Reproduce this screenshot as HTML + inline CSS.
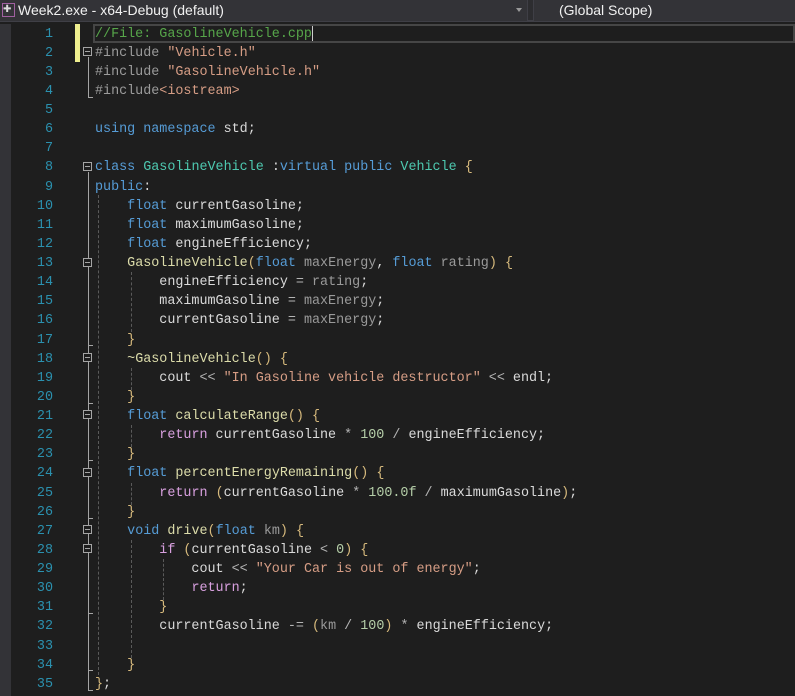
<!DOCTYPE html>
<html><head><meta charset="utf-8"><style>
body{margin:0;width:795px;height:696px;background:#1e1e1e;overflow:hidden;position:relative;font-family:"Liberation Mono",monospace;}
.top{position:absolute;left:0;top:0;width:795px;height:22px;background:#2d2d30;border-bottom:2px solid #3f3f46;box-sizing:border-box;}
.dd1{position:absolute;left:0;top:0;width:527px;height:21px;background:#333337;border-right:1px solid #3f3f46;}
.dd2{position:absolute;left:533px;top:0;width:262px;height:21px;background:#333337;border-left:1px solid #3f3f46;}
.tt{font-family:"Liberation Sans",sans-serif;font-size:14px;color:#f1f1f1;position:absolute;top:2px;}
.strip{position:absolute;left:0;top:24px;width:11px;height:672px;background:#333337;}
.ln{position:absolute;left:11px;width:42px;text-align:right;color:#2b91af;font-size:13.4px;line-height:19.12px;}
.code{position:absolute;left:95px;color:#dadada;font-size:13.4px;line-height:19.12px;white-space:pre;}
.k{color:#569cd6}.t{color:#4ec9b0}.s{color:#d69d85}.c{color:#57a64a}.f{color:#dcdcaa}.p{color:#9a9a9a}.n{color:#b5cea8}.o{color:#b4b4b4}.r{color:#d8a0df}.b{color:#d7ba7d}.pp{color:#9b9b9b}
.fold{position:absolute;left:83px;width:9px;height:9px;border:1px solid #a5a5a5;box-sizing:border-box;background:#1e1e1e;}
.fold:after{content:"";position:absolute;left:1px;top:3px;width:5px;height:1px;background:#a5a5a5;}
.vl{position:absolute;left:88px;width:1px;background:#a5a5a5;}
.tick{position:absolute;left:88px;width:5px;height:1px;background:#a5a5a5;}
.g{position:absolute;width:0;border-left:1px dashed #5a5a5a;}
</style></head><body>
<div class="top"><div class="dd1"><span style="position:absolute;left:2px;top:3px;width:13px;height:14px;border:1px solid #a060a0;box-sizing:border-box;color:#ddd;font-size:10px;line-height:12px;font-family:'DejaVu Sans';">✚</span><span class="tt" style="left:18px">Week2.exe - x64-Debug (default)</span><span style="position:absolute;left:516px;top:8px;border-left:3px solid transparent;border-right:3px solid transparent;border-top:4px solid #999;"></span></div>
<div class="dd2"><span class="tt" style="left:25px">(Global Scope)</span></div></div>
<div class="strip"></div>
<div style="position:absolute;left:75px;top:24px;width:5px;height:38px;background:#efef8f"></div>
<div style="position:absolute;left:93px;top:24px;width:702px;height:19px;border:2px solid #464646;box-sizing:border-box;"></div>
<div style="position:absolute;left:312px;top:26px;width:1px;height:15px;background:#ccc"></div>
<div class="ln" style="top:24.5px">1<br>2<br>3<br>4<br>5<br>6<br>7<br>8<br>9<br>10<br>11<br>12<br>13<br>14<br>15<br>16<br>17<br>18<br>19<br>20<br>21<br>22<br>23<br>24<br>25<br>26<br>27<br>28<br>29<br>30<br>31<br>32<br>33<br>34<br>35</div>
<div class="vl" style="top:57px;height:40px"></div><div class="tick" style="top:97px"></div>
<div class="vl" style="top:172px;height:519px"></div><div class="tick" style="top:690px"></div>
<div class="tick" style="top:345px"></div><div class="tick" style="top:403px"></div><div class="tick" style="top:460px"></div><div class="tick" style="top:518px"></div><div class="tick" style="top:613px"></div><div class="tick" style="top:670px"></div>
<div class="g" style="left:98px;top:195px;height:480px"></div>
<div class="g" style="left:131px;top:272px;height:60px"></div>
<div class="g" style="left:131px;top:368px;height:22px"></div>
<div class="g" style="left:131px;top:425px;height:22px"></div>
<div class="g" style="left:131px;top:483px;height:22px"></div>
<div class="g" style="left:131px;top:540px;height:118px"></div>
<div class="g" style="left:163px;top:559px;height:41px"></div>
<div class="fold" style="top:47px"></div><div class="fold" style="top:162px"></div><div class="fold" style="top:258px"></div><div class="fold" style="top:353px"></div><div class="fold" style="top:410px"></div><div class="fold" style="top:468px"></div><div class="fold" style="top:525px"></div><div class="fold" style="top:544px"></div>
<div class="code" style="top:24.5px"><span class="c">//File: GasolineVehicle.cpp</span>
<span class="pp">#include</span> <span class="s">"Vehicle.h"</span>
<span class="pp">#include</span> <span class="s">"GasolineVehicle.h"</span>
<span class="pp">#include</span><span class="s">&lt;iostream&gt;</span>

<span class="k">using namespace</span> std;

<span class="k">class</span> <span class="t">GasolineVehicle</span> :<span class="k">virtual public</span> <span class="t">Vehicle</span> <span class="b">{</span>
<span class="k">public</span>:
    <span class="k">float</span> currentGasoline;
    <span class="k">float</span> maximumGasoline;
    <span class="k">float</span> engineEfficiency;
    <span class="f">GasolineVehicle</span><span class="b">(</span><span class="k">float</span> <span class="p">maxEnergy</span>, <span class="k">float</span> <span class="p">rating</span><span class="b">)</span> <span class="b">{</span>
        engineEfficiency <span class="o">=</span> <span class="p">rating</span>;
        maximumGasoline <span class="o">=</span> <span class="p">maxEnergy</span>;
        currentGasoline <span class="o">=</span> <span class="p">maxEnergy</span>;
    <span class="b">}</span>
    <span class="f">~GasolineVehicle</span><span class="b">()</span> <span class="b">{</span>
        cout <span class="o">&lt;&lt;</span> <span class="s">"In Gasoline vehicle destructor"</span> <span class="o">&lt;&lt;</span> endl;
    <span class="b">}</span>
    <span class="k">float</span> <span class="f">calculateRange</span><span class="b">()</span> <span class="b">{</span>
        <span class="r">return</span> currentGasoline <span class="o">*</span> <span class="n">100</span> <span class="o">/</span> engineEfficiency;
    <span class="b">}</span>
    <span class="k">float</span> <span class="f">percentEnergyRemaining</span><span class="b">()</span> <span class="b">{</span>
        <span class="r">return</span> <span class="b">(</span>currentGasoline <span class="o">*</span> <span class="n">100.0f</span> <span class="o">/</span> maximumGasoline<span class="b">)</span>;
    <span class="b">}</span>
    <span class="k">void</span> <span class="f">drive</span><span class="b">(</span><span class="k">float</span> <span class="p">km</span><span class="b">)</span> <span class="b">{</span>
        <span class="r">if</span> <span class="b">(</span>currentGasoline <span class="o">&lt;</span> <span class="n">0</span><span class="b">)</span> <span class="b">{</span>
            cout <span class="o">&lt;&lt;</span> <span class="s">"Your Car is out of energy"</span>;
            <span class="r">return</span>;
        <span class="b">}</span>
        currentGasoline <span class="o">-=</span> <span class="b">(</span><span class="p">km</span> <span class="o">/</span> <span class="n">100</span><span class="b">)</span> <span class="o">*</span> engineEfficiency;

    <span class="b">}</span>
<span class="b">}</span>;</div>
</body></html>
